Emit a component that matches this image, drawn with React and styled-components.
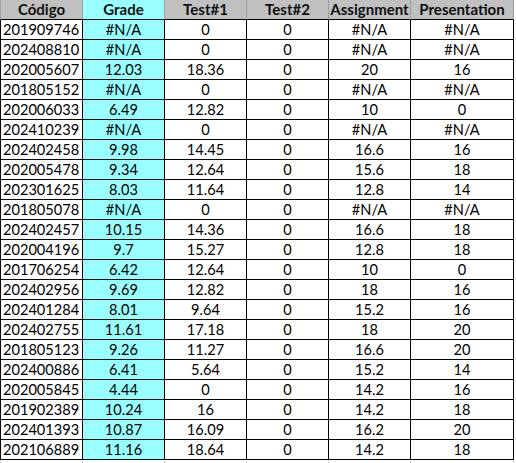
import React from "react";
import styled, { createGlobalStyle } from "styled-components";

const Global = createGlobalStyle`
  html, body { margin: 0; padding: 0; background: #ffffff; }
  body { font-family: Lato, "Open Sans", sans-serif; color: #000; }
`;

const Sheet = styled.div`
  display: grid;
  grid-template-columns: 83px 82px 82px 82px 82px 103px;
  grid-auto-rows: 20px;
  width: 514px;
`;

const HeadCell = styled.div`
  box-sizing: border-box;
  background: ${(p) => (p.$cyan ? "#99ffff" : "#c0c0c0")};
  border-right: 1px solid #a0a0a0;
  border-bottom: 1px solid #000;
  ${(p) => (p.$first ? "border-left: 1px solid #a0a0a0;" : "")}
  font-weight: 700;
  font-size: 15px;
  line-height: 19px;
  text-align: center;
  white-space: nowrap;
  overflow: hidden;
  color: #111;
`;

const Cell = styled.div`
  box-sizing: border-box;
  background: ${(p) => (p.$cyan ? "#99ffff" : "#ffffff")};
  border-right: 1px solid #000;
  border-bottom: 1px solid #000;
  ${(p) => (p.$first ? "border-left: 1px solid #000; padding-left: 2px;" : "")}
  font-size: 14.6px;
  line-height: 20px;
  text-align: ${(p) => (p.$first ? "left" : "center")};
  white-space: nowrap;
  overflow: hidden;
  color: #000;
`;

const GhostCell = styled.div`
  box-sizing: border-box;
  border-right: 1px solid #d4d4d4;
  ${(p) => (p.$first ? "border-left: 1px solid #d4d4d4;" : "")}
`;

const headers = ["Código", "Grade", "Test#1", "Test#2", "Assignment", "Presentation"];

const rows = [
  ["201909746", "#N/A", "0", "0", "#N/A", "#N/A"],
  ["202408810", "#N/A", "0", "0", "#N/A", "#N/A"],
  ["202005607", "12.03", "18.36", "0", "20", "16"],
  ["201805152", "#N/A", "0", "0", "#N/A", "#N/A"],
  ["202006033", "6.49", "12.82", "0", "10", "0"],
  ["202410239", "#N/A", "0", "0", "#N/A", "#N/A"],
  ["202402458", "9.98", "14.45", "0", "16.6", "16"],
  ["202005478", "9.34", "12.64", "0", "15.6", "18"],
  ["202301625", "8.03", "11.64", "0", "12.8", "14"],
  ["201805078", "#N/A", "0", "0", "#N/A", "#N/A"],
  ["202402457", "10.15", "14.36", "0", "16.6", "18"],
  ["202004196", "9.7", "15.27", "0", "12.8", "18"],
  ["201706254", "6.42", "12.64", "0", "10", "0"],
  ["202402956", "9.69", "12.82", "0", "18", "16"],
  ["202401284", "8.01", "9.64", "0", "15.2", "16"],
  ["202402755", "11.61", "17.18", "0", "18", "20"],
  ["201805123", "9.26", "11.27", "0", "16.6", "20"],
  ["202400886", "6.41", "5.64", "0", "15.2", "14"],
  ["202005845", "4.44", "0", "0", "14.2", "16"],
  ["201902389", "10.24", "16", "0", "14.2", "18"],
  ["202401393", "10.87", "16.09", "0", "16.2", "20"],
  ["202106889", "11.16", "18.64", "0", "14.2", "18"],
];

export default function App() {
  return (
    <>
      <Global />
      <Sheet>
        {headers.map((h, i) => (
          <HeadCell key={h} $first={i === 0} $cyan={i === 1}>
            {h}
          </HeadCell>
        ))}
        {rows.map((r, ri) =>
          r.map((v, ci) => (
            <Cell key={ri + "-" + ci} $first={ci === 0} $cyan={ci === 1}>
              {v}
            </Cell>
          ))
        )}
        {headers.map((h, i) => (
          <GhostCell key={"g" + h} $first={i === 0} />
        ))}
      </Sheet>
    </>
  );
}
